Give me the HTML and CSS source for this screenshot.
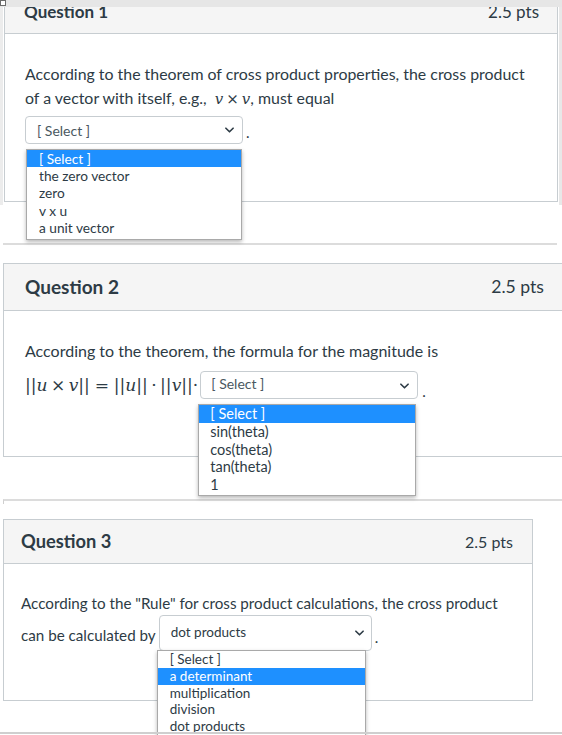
FILE: index.html
```html
<!DOCTYPE html>
<html lang="en">
<head>
<meta charset="utf-8">
<title>Quiz questions</title>
<link rel="stylesheet" href="styles.css">
</head>
<body>
<main class="collage">

  <section class="shot shot1">
    <div class="topbar"><span class="tick"></span></div>
    <div class="stage1">
      <article class="card card1">
        <header class="qhead">
          <h2 class="qtitle">Question 1</h2>
          <span class="pts">2.5 pts</span>
        </header>
        <div class="qbody">
          <p class="qtext">According to the theorem of cross product properties, the cross product of a vector with itself, e.g., <span class="math"><i>v</i><span class="op bin">×</span><i>v</i></span>, must equal</p>
          <div class="answer">
            <div class="selwrap">
              <div class="select"><span class="sel-label">[ Select ]</span><svg class="chev" viewBox="0 0 10 6" aria-hidden="true"><polyline points="1,1 5,5 9,1"/></svg></div>
              <ul class="dropdown">
                <li class="hl">[ Select ]</li>
                <li>the zero vector</li>
                <li>zero</li>
                <li>v x u</li>
                <li>a unit vector</li>
              </ul>
            </div>
            <span class="dot">.</span>
          </div>
        </div>
      </article>
    </div>
    <div class="seam seam1"></div>
  </section>

  <section class="shot shot2">
    <article class="card card2">
      <header class="qhead">
        <h2 class="qtitle">Question 2</h2>
        <span class="pts">2.5 pts</span>
      </header>
      <div class="qbody">
        <p class="qtext">According to the theorem, the formula for the magnitude is</p>
        <div class="answer">
          <span class="math">||<i>u</i><span class="op bin">×</span><i>v</i>||<span class="op rel">=</span>||<i>u</i>||<span class="op bin">·</span>||<i>v</i>||·</span>
          <div class="selwrap">
            <div class="select"><span class="sel-label">[ Select ]</span><svg class="chev" viewBox="0 0 10 6" aria-hidden="true"><polyline points="1,1 5,5 9,1"/></svg></div>
            <ul class="dropdown">
              <li class="hl">[ Select ]</li>
              <li>sin(theta)</li>
              <li>cos(theta)</li>
              <li>tan(theta)</li>
              <li>1</li>
            </ul>
          </div>
          <span class="dot">.</span>
        </div>
      </div>
    </article>
    <div class="seam seam2"></div>
  </section>

  <section class="shot shot3">
    <article class="card card3">
      <header class="qhead">
        <h2 class="qtitle">Question 3</h2>
        <span class="pts">2.5 pts</span>
      </header>
      <div class="qbody">
        <p class="qtext">According to the "Rule" for cross product calculations, the cross product</p>
        <div class="answer">
          <span class="lead">can be calculated by</span>
          <div class="selwrap">
            <div class="select"><span class="sel-label">dot products</span><svg class="chev" viewBox="0 0 10 6" aria-hidden="true"><polyline points="1,1 5,5 9,1"/></svg></div>
            <ul class="dropdown">
              <li>[ Select ]</li>
              <li class="hl">a determinant</li>
              <li>multiplication</li>
              <li>division</li>
              <li>dot products</li>
            </ul>
          </div>
          <span class="dot">.</span>
        </div>
      </div>
    </article>
    <div class="seam seam3"></div>
  </section>

</main>
</body>
</html>
```

FILE: styles.css
```css
* { box-sizing: border-box; }

html, body {
  margin: 0;
  padding: 0;
  background: #ffffff;
}

body {
  width: 562px;
  height: 735px;
  overflow: hidden;
  font-family: Lato, "Open Sans", "Liberation Sans", sans-serif;
  color: #2d3b45;
}

.collage {
  display: flex;
  flex-direction: column;
  width: 562px;
}

.shot { position: relative; }

/* ---------- shared card pieces ---------- */
.card {
  border: 1px solid #c7cdd1;
  background: #fff;
}

.qhead {
  display: flex;
  justify-content: space-between;
  background: #f5f5f5;
  border-bottom: 1px solid #c7cdd1;
}

.qtitle {
  margin: 0;
  font-weight: 700;
}

.pts { font-weight: 400; color: #2d3b45; }

.qtext { margin: 0; }

.math {
  font-family: "DejaVu Serif", "Liberation Serif", serif;
  white-space: nowrap;
}
.math i { font-style: italic; }
.math .op.bin { margin: 0 0.2em; }
.math .op.rel { margin: 0 0.28em; }

.answer {
  display: flex;
  align-items: center;
}

.selwrap { position: relative; }

.select {
  display: flex;
  align-items: center;
  justify-content: space-between;
  background: #fff;
  border: 1px solid #c7cdd1;
  border-radius: 4px;
  color: #4a5861;
}

.chev {
  width: 9px;
  height: 6px;
  fill: none;
  stroke: #2d3b45;
  stroke-width: 1.8;
  stroke-linecap: round;
  stroke-linejoin: round;
}

.dropdown {
  position: absolute;
  z-index: 5;
  margin: 0;
  padding: 0 0 3px;
  list-style: none;
  background: #fff;
  border: 1px solid #a9a9a9;
  box-shadow: 0 2px 4px rgba(0, 0, 0, 0.28);
  color: #2d3b45;
}
.dropdown li { white-space: nowrap; }
.dropdown li.hl { background: #1e90ff; color: #fff; }

.seam { background: #dcdcdc; }

/* ---------- shot 1 ---------- */
.topbar {
  position: absolute;
  top: 0; left: 0; right: 0;
  height: 7px;
  background: #e6e6e6;
  z-index: 6;
}
.tick {
  position: absolute;
  left: 0; top: 0;
  width: 6px; height: 6px;
  border: 1px solid #6b6b6b;
  background: #fff;
}

.stage1 {
  height: 205px;
  padding: 0 1px 0 1px;
  border-left: 3px solid #ececec;
  border-right: 3px solid #e8e8e8;
}

.card1 {
  width: 554px;
  height: 202px;
  border-top: none;
}
.card1 .qhead {
  height: 34px;
  padding: 0 18px 0 19px;
  align-items: flex-start;
}
.card1 .qtitle, .card1 .pts { font-size: 17px; line-height: 22px; padding-top: 1px; }
.card1 .qbody { padding: 28px 28px 0 20px; }
.card1 .qtext { font-size: 15.9px; line-height: 24px; }
.card1 .math { font-size: 15px; margin-left: 4px; }
.card1 .answer { margin-top: 5px; }
.card1 .select {
  width: 218px;
  height: 28px;
  padding: 0 8px 0 11px;
  font-size: 14px;
}
.card1 .dot { margin-left: 3px; font-size: 15px; padding-top: 4px; }
.card1 .dropdown {
  top: 33px;
  left: 1px;
  width: 216px;
  font-size: 13.7px;
  line-height: 17.2px;
}
.card1 .dropdown li { padding-left: 12px; }

.seam1 {
  margin: 38px 0 0 3px;
  width: 554px;
  height: 2px;
}

/* ---------- shot 2 ---------- */
.card2 {
  margin: 18px 0 0 3px;
  width: 562px;
  height: 194px;
  border-right: none;
}
.card2 .qhead {
  height: 47px;
  padding: 0 21px 2px;
  align-items: center;
}
.card2 .qtitle { font-size: 19px; }
.card2 .pts { font-size: 17.6px; }
.card2 .qbody { padding: 28px 0 0 21px; }
.card2 .qtext { font-size: 16px; line-height: 24px; }
.card2 .answer { margin-top: 7px; }
.card2 .math { font-size: 17.1px; }
.card2 .select {
  width: 218px;
  height: 28px;
  margin-left: 2px;
  padding: 3px 8px 0 10px;
  align-items: flex-start;
  font-size: 14px;
}
.card2 .chev { margin-top: 8px; }
.card2 .dot { margin-left: 4px; font-size: 15px; padding-top: 12px; }
.card2 .dropdown {
  top: 33px;
  left: 0;
  width: 218px;
  font-size: 14.5px;
  line-height: 17.8px;
  padding-bottom: 1px;
}
.card2 .dropdown li { padding-left: 11px; }

.seam2 {
  margin: 42px 0 0 3px;
  width: 559px;
  height: 5px;
  background: transparent;
  border-top: 2px solid #dcdcdc;
  border-left: 1px solid #cfcfcf;
}

/* ---------- shot 3 ---------- */
.card3 {
  margin: 15px 0 0 3px;
  width: 530px;
  height: 182px;
}
.card3 .qhead {
  height: 44px;
  padding: 0 19px 1px 17px;
  align-items: center;
}
.card3 .qtitle { font-size: 18.3px; }
.card3 .pts { font-size: 16px; }
.card3 .qbody { padding: 27px 0 0 17px; }
.card3 .qtext { font-size: 15.2px; line-height: 24px; }
.card3 .lead { font-size: 15.2px; padding-top: 4px; }
.card3 .select {
  width: 213px;
  height: 36px;
  margin-left: 3px;
  padding: 8px 7px 0 11px;
  align-items: flex-start;
  font-size: 13.5px;
  color: #2d3b45;
}
.card3 .chev { margin-top: 6px; }
.card3 .dot { margin-left: 3px; font-size: 15px; padding-top: 8px; }
.card3 .dropdown {
  top: 35px;
  left: 1px;
  width: 209px;
  font-size: 13.5px;
  line-height: 16.8px;
}
.card3 .dropdown li { padding-left: 12px; }

.seam3 {
  position: relative;
  z-index: 7;
  margin: 31px 0 0 0;
  width: 562px;
  height: 2px;
  background: #cfcfcf;
}
```
